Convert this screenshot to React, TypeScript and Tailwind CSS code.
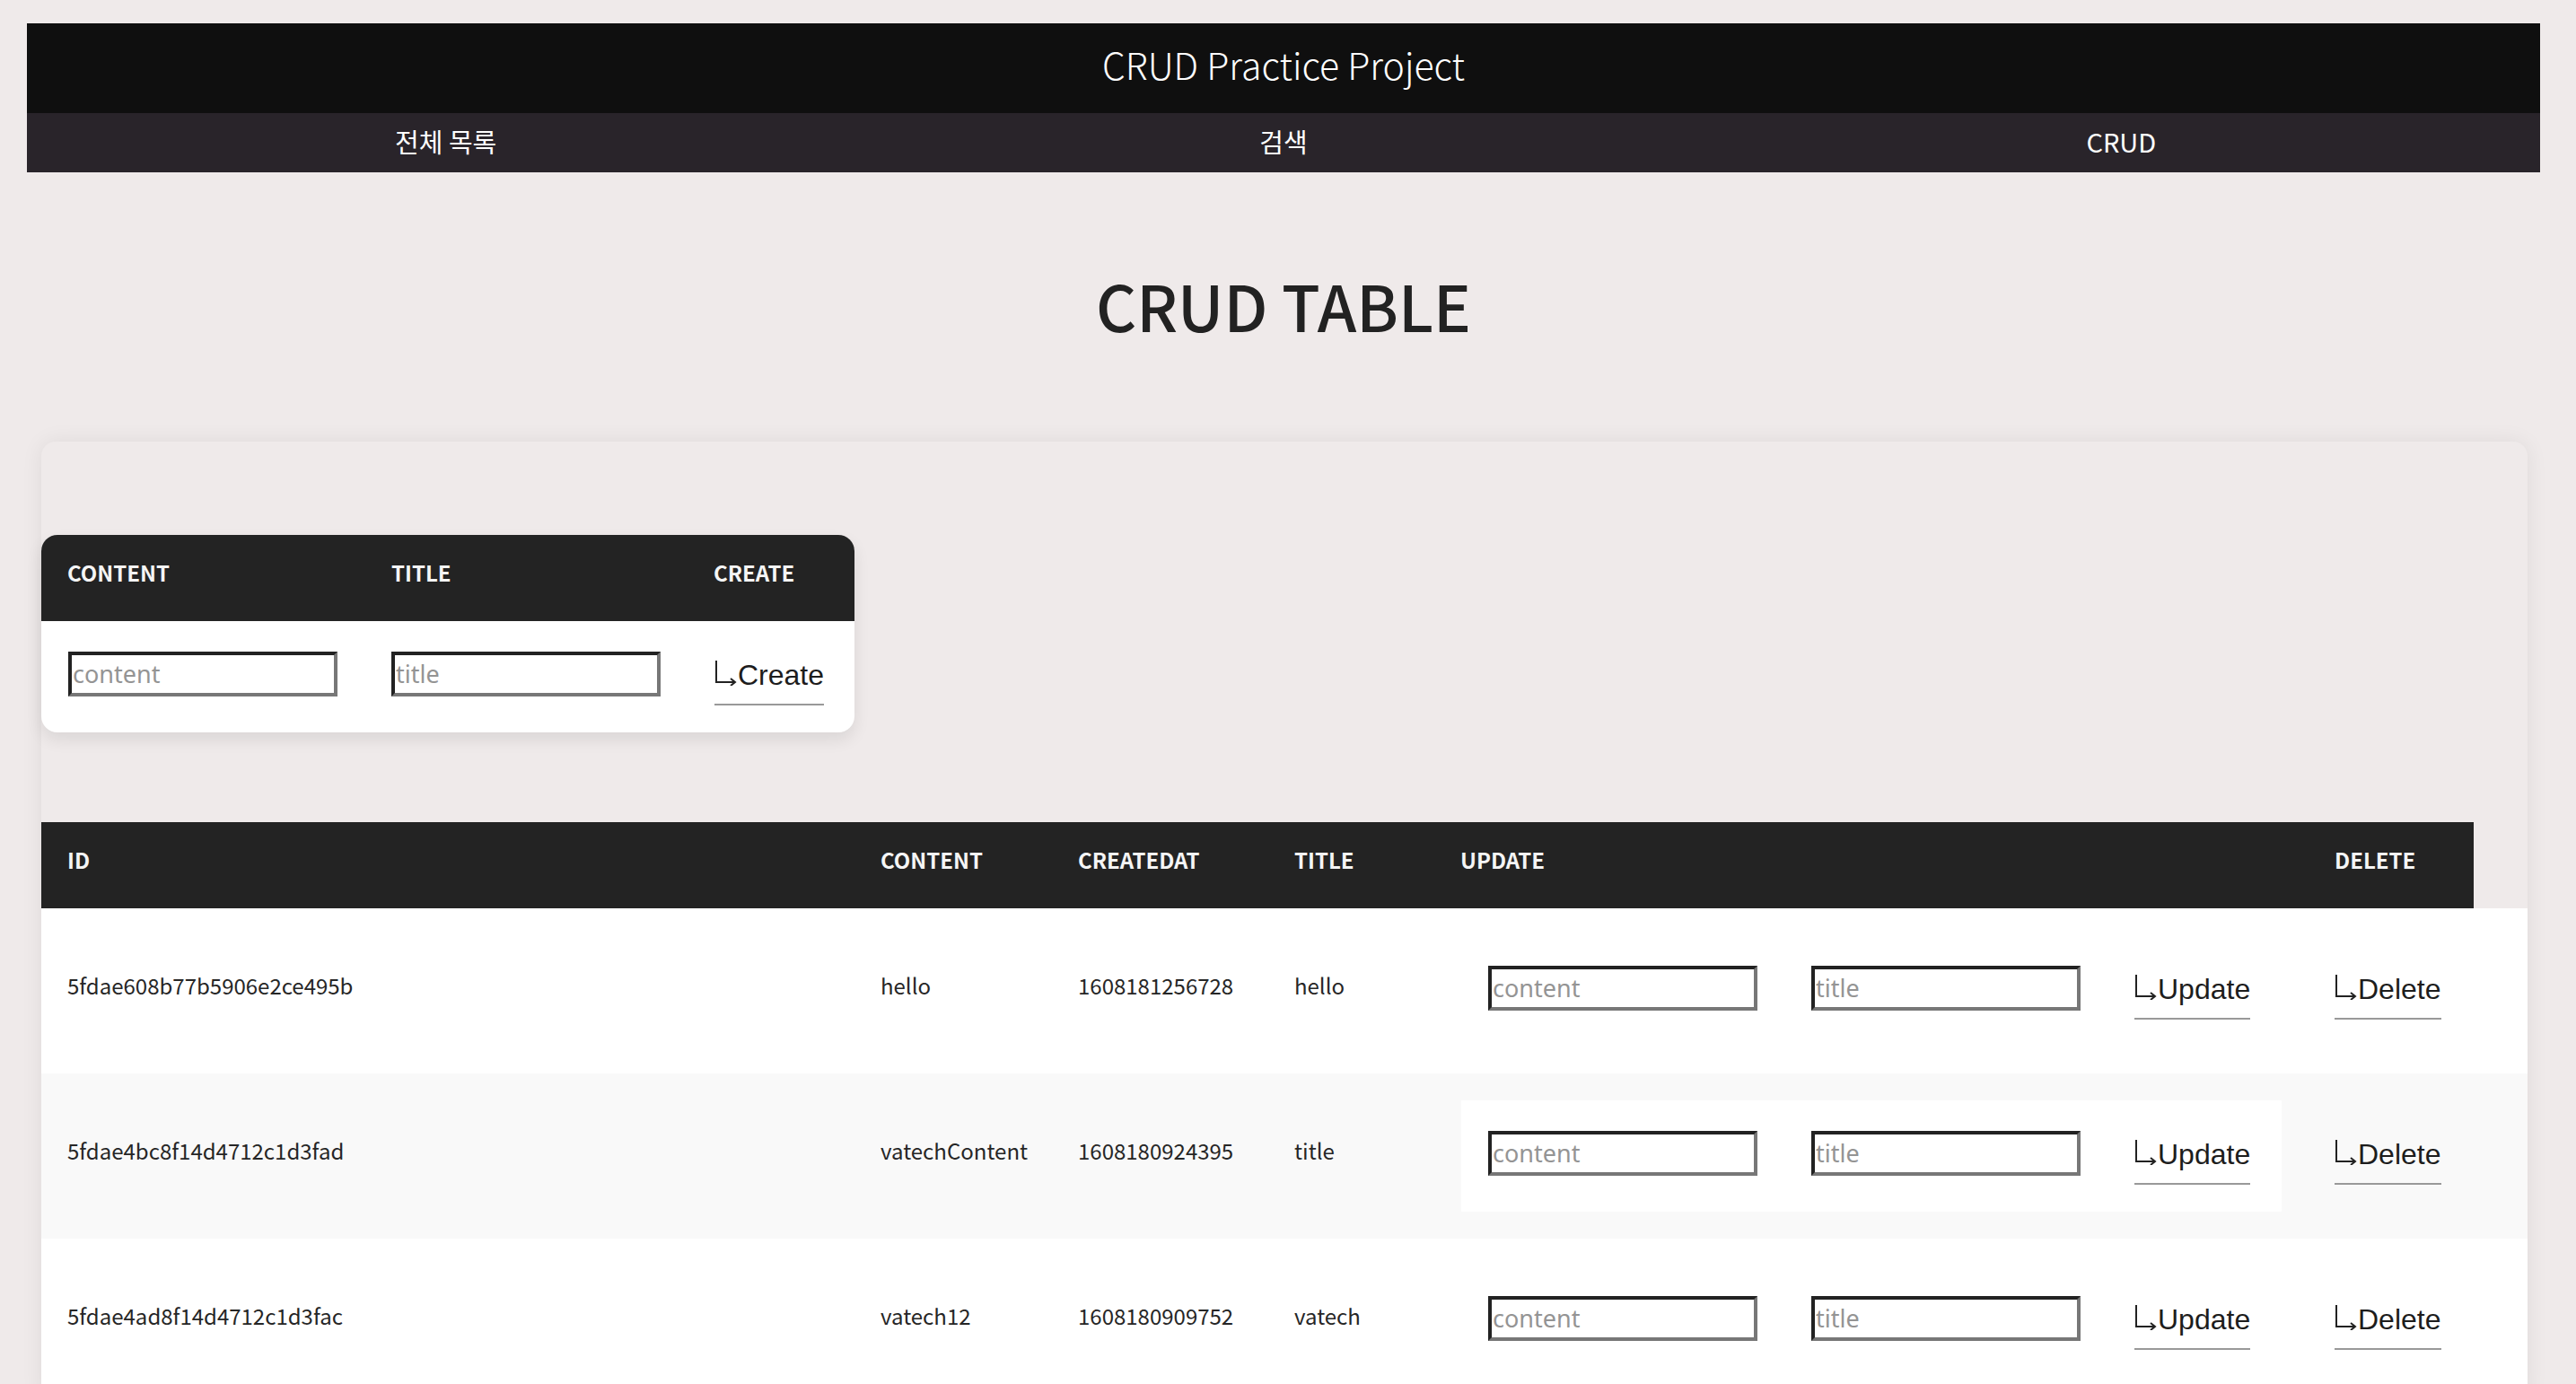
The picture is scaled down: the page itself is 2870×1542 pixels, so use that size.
import React from 'react';

// CRUD practice page: header, create form table, record list table
type Row = {
  id: string;
  content: string;
  createdAt: string;
  title: string;
};

const rows: Row[] = [
  { id: '5fdae608b77b5906e2ce495b', content: 'hello', createdAt: '1608181256728', title: 'hello' },
  { id: '5fdae4bc8f14d4712c1d3fad', content: 'vatechContent', createdAt: '1608180924395', title: 'title' },
  { id: '5fdae4ad8f14d4712c1d3fac', content: 'vatech12', createdAt: '1608180909752', title: 'vatech' },
];

const sans = { fontFamily: '"Noto Sans CJK KR", "Noto Sans", sans-serif' };

function TextInput({ placeholder }: { placeholder: string }) {
  return (
    <input
      placeholder={placeholder}
      className="block w-[300px] h-[50px] border-4 border-solid border-t-[#222] border-l-[#222] border-b-[#777] border-r-[#777] bg-white px-[1px] pb-[2px] text-[27px] text-[#222] placeholder:text-[#949494] outline-none"
      style={{ fontFamily: '"Noto Sans", sans-serif' }}
    />
  );
}

function ActionLink({ label }: { label: string }) {
  return (
    <a
      href="#"
      className="inline-flex items-end border-b-2 border-[#999] pt-[12px] pb-[13px] text-[32px] leading-[37px] text-[#1d1d1d] whitespace-nowrap"
      style={{ fontFamily: '"Liberation Sans", sans-serif' }}
    >
      <svg width="26" height="28" viewBox="0 0 26 28" className="mb-[7px] shrink-0" fill="none" stroke="#222" strokeWidth="2">
        <path d="M2 0 V24 H22" />
        <path d="M18 20 L23 24 L18 28" />
      </svg>
      <span>{label}</span>
    </a>
  );
}

export default function App() {
  return (
    <div className="min-h-screen bg-[#efeaea] pt-[26px] pb-[200px]" style={sans}>
      <div className="ml-[30px] w-[2800px]">
        {/* Header */}
        <div className="h-[100px] bg-[#0f0f0f] flex items-center justify-center pb-[8px]">
          <span className="text-[41px] font-light text-white">CRUD Practice Project</span>
        </div>
        <nav className="h-[66px] bg-[#29242a] grid grid-cols-3 items-center text-center text-[29px] text-white">
          <span className="pb-[2px]">전체 목록</span>
          <span className="pb-[2px]">검색</span>
          <span className="pb-[2px]">CRUD</span>
        </nav>

        {/* Title */}
        <div className="h-[300px] flex items-center justify-center pb-[4px]">
          <h1 className="text-[70px] font-medium text-[#222] leading-none">CRUD TABLE</h1>
        </div>

        {/* Card */}
        <div className="ml-[16px] w-[2770px] rounded-[16px] bg-[#efeaea] shadow-[0_0_24px_rgba(0,0,0,0.07)] pt-[104px]">
          {/* Create table */}
          <div className="w-[906px] rounded-[18px] overflow-hidden bg-white shadow-[0_8px_18px_rgba(0,0,0,0.09)]">
            <div className="h-[96px] bg-[#232323] flex items-center text-[24px] font-bold text-[#f5f5f5]">
              <div className="w-[361px] pl-[29px] pb-[12px]">CONTENT</div>
              <div className="w-[359px] pl-[29px] pb-[12px]">TITLE</div>
              <div className="pl-[29px] pb-[12px]">CREATE</div>
            </div>
            <div className="h-[124px] flex items-center">
              <div className="w-[361px] pl-[30px] mb-[6px]">
                <TextInput placeholder="content" />
              </div>
              <div className="w-[359px] pl-[29px] mb-[6px]">
                <TextInput placeholder="title" />
              </div>
              <div className="pl-[30px]">
                <ActionLink label="Create" />
              </div>
            </div>
          </div>

          {/* List table */}
          <div className="mt-[100px]">
            <div className="w-[2710px] h-[96px] bg-[#232323] flex items-center text-[24px] font-bold text-[#f5f5f5]">
              <div className="w-[906px] pl-[29px] pb-[12px]">ID</div>
              <div className="w-[220px] pl-[29px] pb-[12px]">CONTENT</div>
              <div className="w-[241px] pl-[29px] pb-[12px]">CREATEDAT</div>
              <div className="w-[185px] pl-[29px] pb-[12px]">TITLE</div>
              <div className="w-[974px] pl-[29px] pb-[12px]">UPDATE</div>
              <div className="pl-[29px] pb-[12px]">DELETE</div>
            </div>
            {rows.map((row, i) => (
              <div
                key={row.id}
                className={`h-[184px] flex items-center text-[24px] text-[#262626] ${i % 2 === 1 ? 'bg-[#f9f9f9]' : 'bg-white'}`}
              >
                <div className="w-[906px] pl-[29px] pb-[12px]">{row.id}</div>
                <div className="w-[220px] pl-[29px] pb-[12px]">{row.content}</div>
                <div className="w-[241px] pl-[29px] pb-[12px]">{row.createdAt}</div>
                <div className="w-[185px] pl-[29px] pb-[12px]">{row.title}</div>
                <div className="w-[974px] px-[30px]">
                  <div className="bg-white flex items-center">
                    <div className="p-[30px] mb-[6px]">
                      <TextInput placeholder="content" />
                    </div>
                    <div className="p-[30px] mb-[6px]">
                      <TextInput placeholder="title" />
                    </div>
                    <div className="p-[30px]">
                      <ActionLink label="Update" />
                    </div>
                  </div>
                </div>
                <div className="pl-[29px]">
                  <ActionLink label="Delete" />
                </div>
              </div>
            ))}
          </div>
        </div>
      </div>
    </div>
  );
}
